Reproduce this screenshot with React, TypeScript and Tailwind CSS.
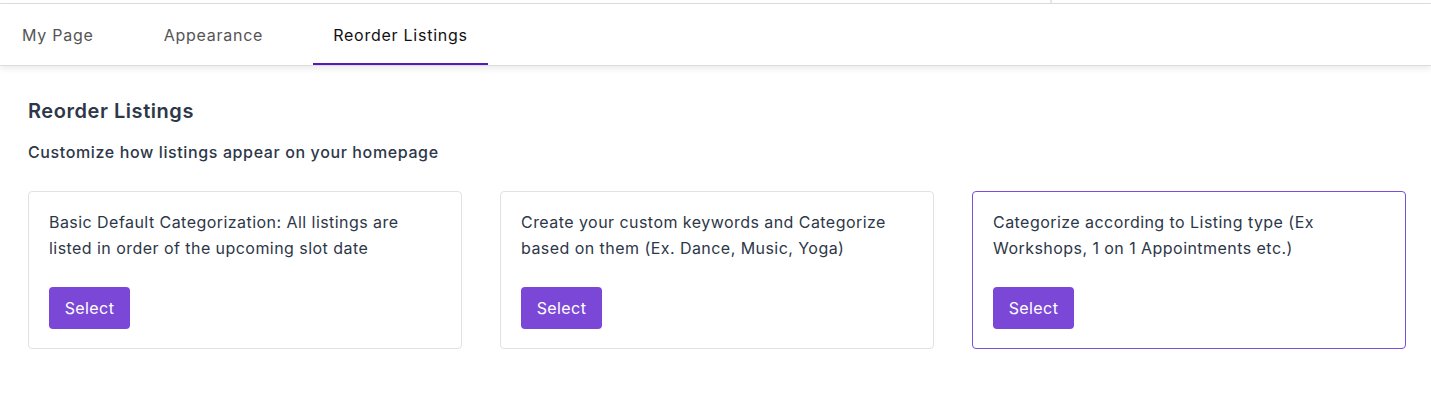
import React from 'react';

const tabs = ['My Page', 'Appearance', 'Reorder Listings'];

const options = [
  {
    id: 'default',
    text: 'Basic Default Categorization: All listings are listed in order of the upcoming slot date',
  },
  {
    id: 'keywords',
    text: 'Create your custom keywords and Categorize based on them (Ex. Dance, Music, Yoga)',
  },
  {
    id: 'type',
    text: 'Categorize according to Listing type (Ex Workshops, 1 on 1 Appointments etc.)',
  },
];

export default function App() {
  const active = 'Reorder Listings';
  const selected = 'type';

  return (
    <div className="min-h-[393px] bg-white" style={{ fontFamily: 'Inter, "Noto Sans", sans-serif' }}>
      {/* top strip */}
      <div className="flex h-[4px] border-b border-[#dedede]">
        <div className="w-[1052px] border-r-2 border-[#e6e6e6]" />
      </div>

      {/* tabs */}
      <nav className="flex h-[62px] items-end gap-[30px] border-b border-[#dcdcdc] pl-[2px] shadow-[0_3px_6px_rgba(0,0,0,0.08)]">
        {tabs.map((t) => (
          <button
            key={t}
            className={`flex h-full items-center px-5 pt-[2px] text-[16px] tracking-[0.75px] ${
              t === active
                ? 'border-b-2 border-[#5717c1] text-[#111]'
                : 'border-b-2 border-transparent text-[#555]'
            }`}
          >
            {t}
          </button>
        ))}
      </nav>

      <main className="pl-[28px] pr-[25px] pt-[32px]">
        <h2 className="text-[20px] font-semibold leading-[26px] tracking-[0.55px] text-[#2d3748]">
          Reorder Listings
        </h2>
        <p className="mt-[18px] text-[16px] font-medium leading-[20px] tracking-[0.62px] text-[#2d3748]">
          Customize how listings appear on your homepage
        </p>

        <div className="mt-[29px] grid grid-cols-3 gap-[38px]">
          {options.map((o) => (
            <div
              key={o.id}
              className={`rounded-[4px] border px-[20px] pb-[19px] pt-[17px] ${
                o.id === selected ? 'border-[#7c4ddb]' : 'border-[#e2e2e2]'
              }`}
            >
              <p className="pr-[10px] text-[16px] leading-[26px] tracking-[0.45px] text-[#2d3748]">{o.text}</p>
              <button className="mt-[26px] h-[42px] w-[81px] rounded-[4px] bg-[#7b47d6] text-[16px] tracking-[0.4px] text-white">
                Select
              </button>
            </div>
          ))}
        </div>
      </main>
    </div>
  );
}
